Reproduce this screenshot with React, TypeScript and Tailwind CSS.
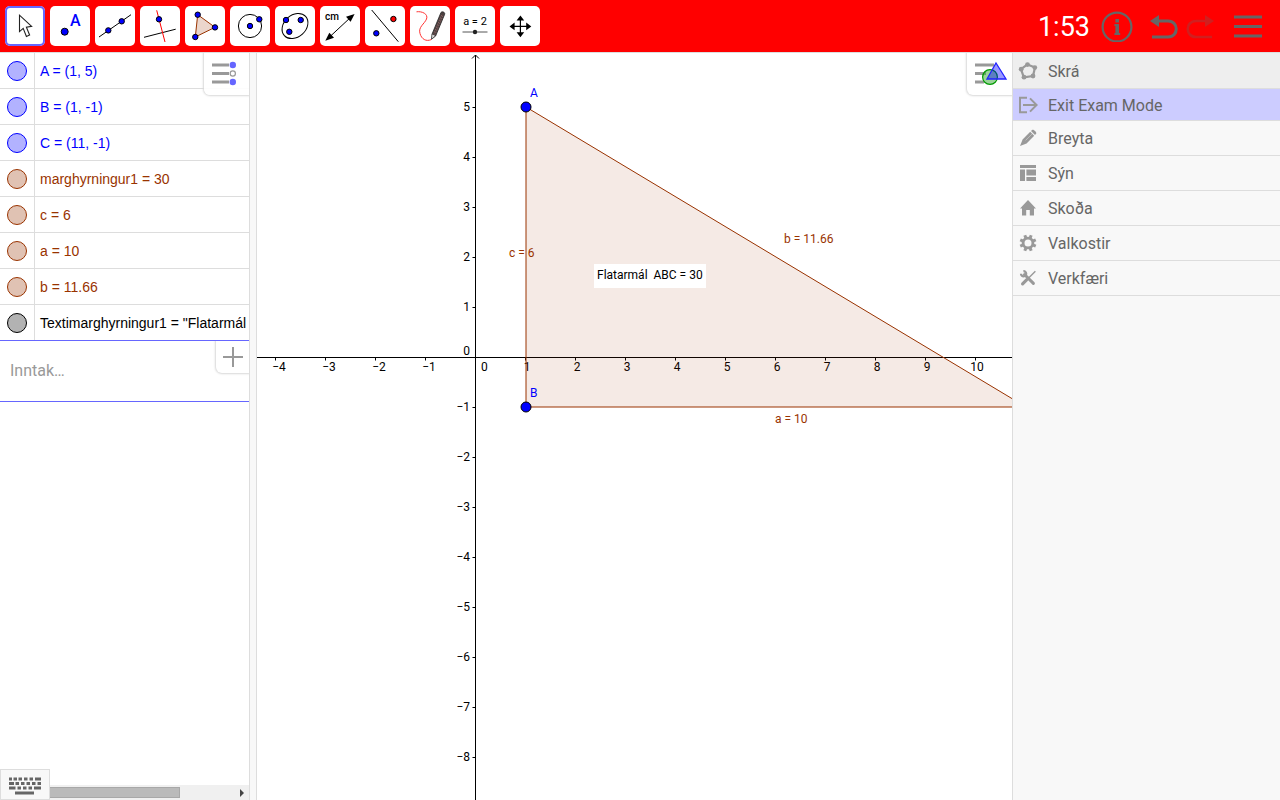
import type { ReactNode } from "react";

const UNIT = 50;
const ORIGIN_X = 218;
const ORIGIN_Y = 304;
const BROWN = "#993300";

const px = (x: number) => ORIGIN_X + 1 + x * UNIT;
const py = (y: number) => ORIGIN_Y - y * UNIT;
const range = (from: number, to: number) =>
  Array.from({ length: to - from + 1 }, (_, i) => from + i);
const label = (n: number) => (n < 0 ? `\u2212${-n}` : `${n}`);

function Dot({ x, y, r = 2.7, fill = "#0000ff" }: { x: number; y: number; r?: number; fill?: string }) {
  return <circle cx={x} cy={y} r={r} fill={fill} stroke="#000" strokeWidth="1" />;
}

const tools: { name: string; icon: ReactNode }[] = [
  {
    name: "Move",
    icon: (
      <path d="M14.5 9.2V25.6L18.2 22.4L21.4 30.4L24.6 29L21.4 21.2L26.6 20.4Z" fill="#fff" stroke="#222" strokeWidth="1.1" />
    ),
  },
  {
    name: "Point",
    icon: (
      <>
        <Dot x={14.7} y={25.7} r={3.5} />
        <text x="20" y="20" fontSize="16" fontWeight="500" fill="#0000ff">A</text>
      </>
    ),
  },
  {
    name: "Line",
    icon: (
      <>
        <path d="M4 31L36 8.7" stroke="#000" />
        <Dot x={13.3} y={24.4} />
        <Dot x={26.7} y={15.3} />
      </>
    ),
  },
  {
    name: "Perpendicular line",
    icon: (
      <>
        <path d="M4 31.3L35.7 23.2" stroke="#000" />
        <path d="M16.7 4.3L25 36" stroke="#ff0000" />
        <Dot x={19} y={13.3} />
      </>
    ),
  },
  {
    name: "Polygon",
    icon: (
      <>
        <path d="M12.7 8.7L30 21.3L10.3 31Z" fill="#ebd6cc" stroke={BROWN} />
        <Dot x={12.7} y={8.7} />
        <Dot x={30} y={21.4} />
        <Dot x={10.3} y={31} />
      </>
    ),
  },
  {
    name: "Circle",
    icon: (
      <>
        <circle cx="20" cy="20" r="11.6" fill="none" stroke="#000" />
        <Dot x={20} y={20} />
        <Dot x={29.3} y={13.3} />
      </>
    ),
  },
  {
    name: "Ellipse",
    icon: (
      <>
        <ellipse cx="20" cy="20" rx="14.3" ry="11" transform="rotate(-42 20 20)" fill="none" stroke="#000" />
        <Dot x={11} y={14} />
        <Dot x={25.7} y={14} />
        <Dot x={14.3} y={25.8} />
      </>
    ),
  },
  {
    name: "Distance",
    icon: (
      <>
        <text x="5" y="14" fontSize="10" fontWeight="500" fill="#000">cm</text>
        <path d="M9 31.5L31 11" stroke="#000" />
        <path d="M5.3 34.8L9.3 26.8L14 31.8Z" fill="#000" />
        <path d="M34.6 8L26 10.8L30.6 15.8Z" fill="#000" />
      </>
    ),
  },
  {
    name: "Reflect",
    icon: (
      <>
        <path d="M6.7 4L33.3 35.7" stroke="#000" />
        <Dot x={11.3} y={27.3} />
        <Dot x={28.4} y={13} fill="#ff0000" />
      </>
    ),
  },
  {
    name: "Pen",
    icon: (
      <>
        <path d="M6.5 5.8C12 5 18.5 8 16.5 13C14.5 18 8 21 10 27.5C11.5 33 16 36 21.5 33.5" fill="none" stroke="#ff3333" strokeWidth="1" />
        <path d="M31 6.4C32.4 5 35.4 6.4 34.6 8.4L25.6 30L21.6 33.2L22 28.2Z" fill="#4d4040" stroke="#222" strokeWidth="0.8" />
        <path d="M31.6 9L23.8 27.8M33 9.6L25 28.6" stroke="#a07070" strokeWidth="0.7" strokeDasharray="1.5 1" />
        <path d="M22.3 28.6L25 29.8L22 32.4Z" fill="#ddd" />
      </>
    ),
  },
  {
    name: "Slider",
    icon: (
      <>
        <text x="20" y="19" fontSize="11" textAnchor="middle" fill="#000">a = 2</text>
        <path d="M7.5 26H32.5" stroke="#555" />
        <circle cx="20" cy="26" r="2.2" fill="#222" />
      </>
    ),
  },
  {
    name: "Move graphics view",
    icon: (
      <>
        <path d="M12 20.4H29M20.4 12V29" stroke="#000" strokeWidth="1.2" />
        <path
          d="M9.5 20.4L14.6 16.6V24.2ZM31.3 20.4L26.2 16.6V24.2ZM20.4 9.5L16.6 14.6H24.2ZM20.4 31.3L16.6 26.2H24.2Z"
          fill="#000"
        />
      </>
    ),
  },
];

const objects = [
  { text: "A = (1, 5)", tone: "blue" },
  { text: "B = (1, -1)", tone: "blue" },
  { text: "C = (11, -1)", tone: "blue" },
  { text: "marghyrningur1 = 30", tone: "brown" },
  { text: "c = 6", tone: "brown" },
  { text: "a = 10", tone: "brown" },
  { text: "b = 11.66", tone: "brown" },
  { text: 'Textimarghyrningur1 = "Flatarmál', tone: "black" },
];

const textTone: Record<string, string> = {
  blue: "text-[#0000ff]",
  brown: "text-[#993300]",
  black: "text-black",
};
const marbleTone: Record<string, string> = {
  blue: "border-[#0000ff] bg-[#b2b2ff]",
  brown: "border-[#993300] bg-[#e0c2b3]",
  black: "border-black bg-[#b2b2b2]",
};

const menu: { name: string; row: string; icon: ReactNode }[] = [
  {
    name: "Skrá",
    row: "h-9 bg-[#eeeeee]",
    icon: (
      <>
        <path d="M9.5 3.4L17 6.4L15 15L5.8 16.4L3 8.2Z" fill="none" stroke="#999" strokeWidth="2.2" strokeLinejoin="round" />
        <g fill="#999">
          <circle cx="9.5" cy="3.6" r="2.4" />
          <circle cx="16.8" cy="6.6" r="2.4" />
          <circle cx="15" cy="15" r="2.4" />
          <circle cx="6" cy="16.2" r="2.4" />
          <circle cx="3.2" cy="8.2" r="2.4" />
        </g>
      </>
    ),
  },
  {
    name: "Exit Exam Mode",
    row: "h-8 bg-[#ccccff]",
    icon: (
      <path d="M9 2.8H2V17.2H9M5 10H18M12 3.4L18.6 10L12 16.6" fill="none" stroke="#999" strokeWidth="2" />
    ),
  },
  {
    name: "Breyta",
    row: "h-[35px]",
    icon: (
      <>
        <path d="M2 18L4.6 11.4L12.2 3.8L16.2 7.8L8.6 15.4Z" fill="#999" />
        <path d="M13 3L14.4 1.8C15.8 1.2 18.8 4.2 18.2 5.6L17 7Z" fill="#999" />
        <path d="M7.6 12.4L14 6" stroke="#ccc" strokeWidth="0.7" />
      </>
    ),
  },
  {
    name: "Sýn",
    row: "h-[35px]",
    icon: <path d="M2 2H18V5H2ZM2 6.6H7V18H2ZM8.4 6.6H18V12.4H8.4ZM8.4 14H18V18H8.4Z" fill="#999" />,
  },
  {
    name: "Skoða",
    row: "h-[35px]",
    icon: <path d="M10 2L18 10.4H16V17.6H11.8V12H8.2V17.6H4V10.4H2Z" fill="#999" />,
  },
  {
    name: "Valkostir",
    row: "h-[35px]",
    icon: (
      <>
        <circle cx="10" cy="10" r="4.9" fill="none" stroke="#999" strokeWidth="2.8" />
        <g stroke="#999" strokeWidth="3">
          {[22.5, 67.5, 112.5, 157.5, 202.5, 247.5, 292.5, 337.5].map((a) => (
            <path key={a} d="M10 1.6V5" transform={`rotate(${a} 10 10)`} />
          ))}
        </g>
      </>
    ),
  },
  {
    name: "Verkfæri",
    row: "h-[35px]",
    icon: (
      <>
        <path d="M6.5 6.5L15.4 15.4" stroke="#999" strokeWidth="3" strokeLinecap="round" />
        <path d="M5.4 3.2A2.6 2.6 0 1 1 3 5.8" fill="none" stroke="#999" strokeWidth="2.2" />
        <path d="M17.4 3.2L10.6 10" stroke="#999" strokeWidth="1.4" />
        <path d="M8.6 11.8L4.6 15.8" stroke="#999" strokeWidth="3.2" strokeLinecap="round" />
      </>
    ),
  },
];

function Header() {
  return (
    <header className="flex h-[52px] shrink-0 items-center justify-between bg-[#ff0000] pl-[5px] pr-4">
      <nav className="flex gap-[5px]">
        {tools.map((tool, i) => (
          <button
            key={tool.name}
            aria-label={tool.name}
            className={`flex size-10 items-center justify-center rounded-[5px] bg-white ${
              i === 0 ? "ring-2 ring-[#6666ff] ring-inset" : ""
            }`}
          >
            <svg viewBox="0 0 40 40" className="size-10">{tool.icon}</svg>
          </button>
        ))}
      </nav>
      <div className="flex items-center">
        <time className="mr-[11px] pt-0.5 text-[27px] leading-8 text-white">1:53</time>
        <button aria-label="Info">
          <svg viewBox="0 0 32 32" className="size-8">
            <circle cx="16" cy="17" r="14.4" fill="none" stroke="#666" strokeWidth="2.2" />
            <path d="M14.4 9H18V12.4H14.4ZM13.4 14H18V23H19.2V25H13.4V23H14.4V16H13.4Z" fill="#666" />
          </svg>
        </button>
        <button aria-label="Undo" className="ml-4">
          <svg viewBox="0 0 30 32" className="h-8 w-[30px]">
            <path d="M8 11H19C30 11 30 27 19 27H3" fill="none" stroke="#666" strokeWidth="3" />
            <path d="M1 11L10 5V17Z" fill="#666" />
          </svg>
        </button>
        <button aria-label="Redo" className="ml-[6px]">
          <svg viewBox="0 0 30 32" className="h-8 w-[30px] opacity-30">
            <path d="M22 11H11C0 11 0 27 11 27H27" fill="none" stroke="#666" strokeWidth="2.6" />
            <path d="M29 11L20 5V17Z" fill="#666" />
          </svg>
        </button>
        <button aria-label="Menu" className="ml-[17px]">
          <svg viewBox="0 0 32 32" className="size-8">
            <path d="M2 7H30M2 16.5H30M2 26H30" stroke="#666" strokeWidth="3.2" />
          </svg>
        </button>
      </div>
    </header>
  );
}

function AlgebraView() {
  return (
    <section className="relative flex w-[250px] shrink-0 flex-col border-r border-[#dddddd] bg-white">
      <ul className="font-['Liberation_Sans',Arial,sans-serif] text-sm">
        {objects.map((o, i) => (
          <li key={o.text} className={`flex h-9 border-b ${i === objects.length - 1 ? "border-[#6666ff]" : "border-[#dddddd]"}`}>
            <div className="flex w-[35px] shrink-0 items-center justify-center border-r border-[#dddddd]">
              <button aria-label={`Show ${o.text}`} className={`size-5 rounded-full border ${marbleTone[o.tone]}`} />
            </div>
            <span className={`flex items-center overflow-hidden pl-[5px] whitespace-nowrap ${textTone[o.tone]}`}>{o.text}</span>
          </li>
        ))}
      </ul>
      <div className="relative h-[61px] border-b border-[#6666ff]">
        <input
          aria-label="Inntak"
          placeholder="Inntak…"
          className="h-[58px] w-full px-2.5 text-base outline-none placeholder:text-[#999999]"
        />
        <button
          aria-label="Add"
          className="absolute top-0 right-0 flex h-8 w-[33px] items-center justify-center rounded-bl-md bg-white shadow-[0_0_2px_1px_#d8d8d8] [clip-path:inset(0_0_-4px_-4px)]"
        >
          <svg viewBox="0 0 20 20" className="size-5">
            <path d="M0 10H20M10 0V20" stroke="#999" strokeWidth="2" />
          </svg>
        </button>
      </div>
      <button
        aria-label="Style bar"
        className="absolute top-0 right-0 flex h-[42px] w-[45px] items-center justify-center rounded-bl-md bg-white/90 shadow-[0_0_2px_1px_#d8d8d8] [clip-path:inset(0_0_-4px_-4px)]"
      >
        <svg viewBox="0 0 26 26" className="mr-1.5 size-[26px]">
          <path d="M1 4H18M1 12.5H18M1 21H18" stroke="#999" strokeWidth="3" />
          <circle cx="21.8" cy="4" r="3.2" fill="#6666ff" />
          <circle cx="21.8" cy="12.5" r="2.6" fill="#fff" stroke="#999" strokeWidth="1.2" />
          <circle cx="21.8" cy="21" r="3.2" fill="#6666ff" />
        </svg>
      </button>
      <div className="mt-auto flex items-end">
        <button
          aria-label="Keyboard"
          className="flex h-[31px] w-[50px] shrink-0 items-center justify-center border border-[#dddddd] bg-[#f8f8f8]"
        >
          <svg viewBox="0 0 32 20" className="h-5 w-8">
            <path
              d="M0 4H3M4.5 4H8M9.5 4H13M15 4H18.5M20.5 4H24M26 4H32M0 8.5H5M6.5 8.5H10M12 8.5H15.5M17.5 8.5H21M23 8.5H26.5M28.5 8.5H32M0 13H6.5M8.5 13H12M14 13H17.5M19.5 13H23M25 13H32M6 18H25"
              stroke="#666"
              strokeWidth="3"
            />
          </svg>
        </button>
        <div className="flex h-[15px] grow items-center justify-between bg-[#f0f0f0] pr-[5px]">
          <div className="h-[11px] w-[130px] border border-l-0 border-[#a8a8a8] bg-[#bababa]" />
          <svg viewBox="0 0 4 8" className="h-2 w-1">
            <path d="M0 0L4 4L0 8Z" fill="#444" />
          </svg>
        </div>
      </div>
    </section>
  );
}

function GraphicsView() {
  const axisX = ORIGIN_X + 0.5;
  const axisY = ORIGIN_Y + 0.5;
  return (
    <section className="relative min-w-0 grow overflow-hidden bg-white">
      <svg className="absolute inset-0 size-full" fontSize="12">
        <path d={`M0 ${axisY}H3000M${axisX} 2V3000`} stroke="#000" />
        <path d={`M${axisX - 3.5} 5.5L${axisX} 2L${axisX + 3.5} 5.5`} fill="none" stroke="#000" />
        {range(-4, 10).filter((n) => n !== 0).map((n) => (
          <g key={n}>
            <path d={`M${axisX + n * UNIT} ${axisY}v3`} stroke="#000" />
            <text x={px(n) + (n < 0 ? 3 : 1)} y={ORIGIN_Y + 14} textAnchor="middle">{label(n)}</text>
          </g>
        ))}
        {range(-8, 5).filter((n) => n !== 0).map((n) => (
          <g key={n}>
            <path d={`M${axisX} ${axisY - n * UNIT}h-3`} stroke="#000" />
            <text x={ORIGIN_X - 5} y={py(n) + 4} textAnchor="end">{label(n)}</text>
          </g>
        ))}
        <text x={ORIGIN_X + 6} y={ORIGIN_Y + 14}>0</text>
        <text x={ORIGIN_X - 5} y={ORIGIN_Y - 2} textAnchor="end">0</text>
        <path d={`M${px(1)} ${py(5)}V${py(-1)}H${px(11)}Z`} fill={BROWN} fillOpacity="0.1" stroke={BROWN} />
        <g fill={BROWN}>
          <text x="252" y="204">c = 6</text>
          <text x="527" y="190">b = 11.66</text>
          <text x="518" y="370">a = 10</text>
        </g>
        <rect x="337" y="211" width="112" height="24" fill="#fff" />
        <text x="340" y="226" className="whitespace-pre">{"Flatarmál  ABC = 30"}</text>
        <g fill="#0000ff">
          <circle cx={px(1)} cy={py(5)} r="5" stroke="#000" />
          <circle cx={px(1)} cy={py(-1)} r="5" stroke="#000" />
          <text x="273" y="44">A</text>
          <text x="273" y="344">B</text>
        </g>
      </svg>
      <button
        aria-label="Graphics style bar"
        className="absolute top-0 right-0 flex h-[42px] w-[45px] items-center justify-end rounded-bl-md bg-white shadow-[0_0_2px_1px_#d8d8d8] [clip-path:inset(0_0_-4px_-4px)]"
      >
        <svg viewBox="0 0 34 26" className="mr-[4px] h-[26px] w-[34px]">
          <path d="M1 4H20M1 12.5H12M1 21H10" stroke="#999" strokeWidth="3" />
          <circle cx="16" cy="16" r="7.4" fill="#33aa33" fillOpacity="0.5" stroke="#009900" strokeWidth="1.2" />
          <path d="M22 2L32 18H13Z" fill="#0000ff" fillOpacity="0.4" stroke="#2222ff" strokeWidth="1.3" />
        </svg>
      </button>
    </section>
  );
}

function SideMenu() {
  return (
    <aside className="w-[268px] shrink-0 border-l border-[#dddddd] bg-[#f8f8f8]">
      {menu.map((item) => (
        <button
          key={item.name}
          className={`flex w-full items-center gap-[10px] border-b border-[#dddddd] pl-[5px] text-left text-base text-[#666666] ${item.row}`}
        >
          <svg viewBox="0 0 20 20" className="size-5 shrink-0">{item.icon}</svg>
          <span className="pt-0.5">{item.name}</span>
        </button>
      ))}
    </aside>
  );
}

export default function App() {
  return (
    <div className="flex h-screen flex-col overflow-hidden bg-white font-[Roboto,sans-serif]">
      <Header />
      <main className="flex min-h-0 grow border-t border-[#dddddd]">
        <AlgebraView />
        <div className="w-[7px] shrink-0 border-r border-[#dddddd] bg-[#f8f8f8]" />
        <GraphicsView />
        <SideMenu />
      </main>
    </div>
  );
}
